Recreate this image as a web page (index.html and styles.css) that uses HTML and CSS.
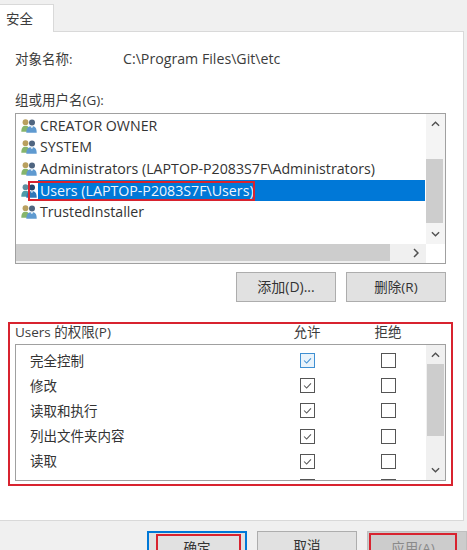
FILE: index.html
```html
<!DOCTYPE html>
<html lang="zh">
<head>
<meta charset="utf-8">
<title>安全</title>
<link rel="stylesheet" href="styles.css">
</head>
<body>
<svg class="defs" width="0" height="0" aria-hidden="true">
  <symbol id="users" viewBox="0 0 16 14">
    <circle cx="4.500" cy="3.200" r="2.900" fill="#b9a05f"/>
    <path d="M0.300 12.800c0-4.200 1.500-6.100 4.200-6.100s4.200 1.900 4.200 6.100z" fill="#86b56c"/>
    <circle cx="11" cy="3.500" r="3" fill="#4f6580"/>
    <path d="M5.300 13.800c0-4.700 2-6.800 5.500-6.800s4.900 2.100 4.900 6.800z" fill="#5f9ad0"/>
    <path d="M9.300 7h3l-.8 1.800h-1.400z" fill="#e4eef6"/>
  </symbol>
  <symbol id="users-sel" viewBox="0 0 16 14">
    <circle cx="4.500" cy="3.200" r="2.900" fill="#5f8fa0"/>
    <path d="M0.300 12.800c0-4.200 1.500-6.100 4.200-6.100s4.200 1.900 4.200 6.100z" fill="#4f9aa8"/>
    <circle cx="11" cy="3.500" r="3" fill="#25466e"/>
    <path d="M5.300 13.800c0-4.700 2-6.800 5.500-6.800s4.900 2.100 4.900 6.800z" fill="#2f78b8"/>
    <path d="M9.300 7h3l-.8 1.800h-1.400z" fill="#b8d4ea"/>
  </symbol>
  <symbol id="up" viewBox="0 0 10 6"><path d="M1 5l4-4 4 4" fill="none" stroke="#505050" stroke-width="1.500"/></symbol>
  <symbol id="down" viewBox="0 0 10 6"><path d="M1 1l4 4 4-4" fill="none" stroke="#505050" stroke-width="1.500"/></symbol>
  <symbol id="right" viewBox="0 0 6 10"><path d="M1 1l4 4-4 4" fill="none" stroke="#505050" stroke-width="1.500"/></symbol>
  <symbol id="tick" viewBox="0 0 15 15"><path d="M3.500 7.500l3 3 5-5.500" fill="none" stroke="currentColor" stroke-width="1.200"/></symbol>
</svg>
<div class="window">
  <div class="tabs"><div class="tab">安全</div></div>
  <main class="panel">
    <div class="object"><span class="object-label">对象名称:</span><span class="latin">C:\Program Files\Git\etc</span></div>
    <div class="group-label">组或用户名(G):</div>
    <div class="listbox">
      <div class="list-main">
        <div class="list-rows">
          <div class="user"><svg class="user-icon"><use href="#users"/></svg><span class="latin user-name">CREATOR OWNER</span></div>
          <div class="user"><svg class="user-icon"><use href="#users"/></svg><span class="latin user-name">SYSTEM</span></div>
          <div class="user"><svg class="user-icon"><use href="#users"/></svg><span class="latin user-name">Administrators (LAPTOP-P2083S7F\Administrators)</span></div>
          <div class="user selected"><svg class="user-icon"><use href="#users-sel"/></svg><span class="latin user-name">Users (LAPTOP-P2083S7F\Users)</span><i class="mark-user"></i></div>
          <div class="user"><svg class="user-icon"><use href="#users"/></svg><span class="latin user-name">TrustedInstaller</span></div>
        </div>
        <div class="vbar vbar-top">
          <svg class="arrow"><use href="#up"/></svg>
          <div class="vtrack"><div class="vthumb"></div></div>
          <svg class="arrow"><use href="#down"/></svg>
        </div>
      </div>
      <div class="hbar">
        <div class="hthumb"></div>
        <svg class="arrow-h"><use href="#right"/></svg>
        <div class="corner"></div>
      </div>
    </div>
    <div class="list-actions">
      <button class="btn btn-wide" type="button">添加(D)...</button>
      <button class="btn" type="button">删除(R)</button>
    </div>
    <section class="perm">
      <div class="perm-head"><span>Users 的权限(P)</span><span class="col">允许</span><span class="col">拒绝</span></div>
      <div class="perm-box">
        <div class="perm-rows">
          <div class="perm-row"><span>完全控制</span><span class="cb focus"><svg><use href="#tick"/></svg></span><span class="cb"></span></div>
          <div class="perm-row"><span>修改</span><span class="cb"><svg><use href="#tick"/></svg></span><span class="cb"></span></div>
          <div class="perm-row"><span>读取和执行</span><span class="cb"><svg><use href="#tick"/></svg></span><span class="cb"></span></div>
          <div class="perm-row"><span>列出文件夹内容</span><span class="cb"><svg><use href="#tick"/></svg></span><span class="cb"></span></div>
          <div class="perm-row"><span>读取</span><span class="cb"><svg><use href="#tick"/></svg></span><span class="cb"></span></div>
          <div class="perm-row"><span></span><span class="cb"></span><span class="cb"></span></div>
        </div>
        <div class="vbar">
          <svg class="arrow"><use href="#up"/></svg>
          <div class="vtrack"><div class="vthumb perm-thumb"></div></div>
          <svg class="arrow"><use href="#down"/></svg>
        </div>
      </div>
    </section>
  </main>
  <footer class="footer">
    <button class="btn btn-ok" type="button"><span class="mark-btn">确定</span></button>
    <button class="btn" type="button">取消</button>
    <button class="btn btn-apply" type="button"><span class="mark-apply">应用(A)</span></button>
  </footer>
</div>
</body>
</html>
```
FILE: styles.css
```css
html, body {
  margin: 0;
  padding: 0;
  background: #f0f0f0;
}
body {
  width: 467px;
  height: 550px;
  overflow: hidden;
  font: 13.5px/18px "Open Sans", "Noto Sans CJK SC", sans-serif;
  color: #3c3c3c;
}
.defs { position: absolute; }
.latin { font-size: 14.2px; }
.window {
  display: flex;
  flex-direction: column;
  height: 550px;
  overflow: hidden;
}
.tabs {
  height: 31px;
  padding-top: 4px;
  box-sizing: border-box;
  flex: none;
}
.tab {
  width: 54px;
  height: 28px;
  box-sizing: border-box;
  background: #fff;
  border: 1px solid #d9d9d9;
  border-width: 1px 1px 0 0;
  padding: 5px 0 0 6px;
  position: relative;
  z-index: 1;
}
.panel {
  width: 464px;
  height: 490px;
  flex: none;
  box-sizing: border-box;
  background: #fff;
  border: 1px solid #d9d9d9;
  border-left: 0;
  padding: 18px 17px 0 15px;
}
.object {
  display: flex;
  height: 18px;
}
.object-label { width: 108px; }
.group-label {
  margin-top: 23px;
  height: 18px;
}
.listbox {
  margin-top: 4px;
  height: 151px;
  box-sizing: border-box;
  border: 1px solid #a0a0a0;
  display: flex;
  flex-direction: column;
}
.list-main {
  flex: none;
  height: 130px;
  display: flex;
}
.list-rows {
  flex: 1;
  padding-top: 1px;
}
.user {
  position: relative;
  height: 21.6px;
  display: flex;
  align-items: center;
  padding-left: 5px;
  color: #333;
  white-space: nowrap;
}
.user-icon {
  width: 16px;
  height: 14px;
  margin-right: 1px;
  flex: none;
}
.user-name { padding-left: 2px; }
.selected .user-name {
  flex: 1;
  background: #0078d7;
  line-height: 21px;
  margin-right: 1px;
  color: #eef5fc;
}
.mark-user {
  position: absolute;
  left: 12px;
  top: 1px;
  width: 223px;
  height: 16px;
  border: 2px solid #d8232f;
}
.vbar {
  width: 19px;
  flex: none;
  display: flex;
  flex-direction: column;
  align-items: center;
  background: #f0f0f0;
}
.vbar-top { background: #f4f4f4; }
.arrow {
  width: 9px;
  height: 6px;
  flex: none;
  margin: 7px 0;
}
.vtrack {
  flex: 1;
  width: 17px;
  margin: -1px 0;
}
.vthumb {
  width: 17px;
  height: 64px;
  margin-top: 26px;
  background: #cdcdcd;
}
.vbar-top .vthumb { margin-left: -1px; }
.hbar {
  height: 19px;
  display: flex;
  background: #f0f0f0;
}
.hthumb {
  width: 374px;
  height: 17px;
  background: #cdcdcd;
}
.arrow-h {
  width: 6px;
  height: 10px;
  margin: 4px 0 0 23px;
}
.corner {
  width: 19px;
  height: 19px;
  margin-left: auto;
  background: #fff;
}
.list-actions {
  margin-top: 8px;
  display: flex;
  justify-content: flex-end;
  gap: 10px;
}
.btn {
  width: 100px;
  height: 30px;
  box-sizing: border-box;
  padding: 0;
  background: #e1e1e1;
  border: 1px solid #adadad;
  font: inherit;
  color: #333;
}
.btn-wide { font-size: 14px; }
.perm {
  margin: 20px -7px 0;
  height: 164px;
  box-sizing: border-box;
  border: 2px solid #d8232f;
  padding: 0 5px;
}
.perm-head {
  display: grid;
  grid-template-columns: 251.5px 81px 81px;
  height: 20px;
  line-height: 16px;
}
.col { text-align: center; }
.perm-box {
  height: 137px;
  box-sizing: border-box;
  border: 1px solid #a0a0a0;
  display: flex;
}
.perm-rows {
  flex: 1;
  overflow: hidden;
  padding-top: 3px;
}
.perm-row {
  display: grid;
  grid-template-columns: 270px 81px 15px;
  height: 25.2px;
  align-items: center;
  padding-left: 14px;
  color: #333;
}
.cb {
  display: block;
  width: 15px;
  height: 15px;
  box-sizing: border-box;
  border: 1px solid #555;
  color: #555;
  background: #fff;
}
.cb svg {
  display: block;
  width: 13px;
  height: 13px;
}
.cb.focus {
  border-color: #3f8fd2;
  color: #3f8fd2;
  background: #e9f3fb;
}
.perm-thumb {
  height: 72px;
  margin-top: 0;
}
.footer {
  flex: none;
  display: flex;
  gap: 10px;
  padding: 10px 0 0 147px;
}
.btn-ok {
  position: relative;
  border: 2px solid #0078d7;
}
.mark-btn {
  position: absolute;
  left: 7px;
  right: 4px;
  top: 1px;
  height: 40px;
  box-sizing: border-box;
  border: 2px solid #d8232f;
  padding: 3px 3px 0 0;
  line-height: 18px;
}
.btn-apply {
  position: relative;
  color: #8a8a8a;
  background: #cccccc;
  border-color: #bfbfbf;
}
.mark-apply {
  position: absolute;
  left: 1px;
  right: 9px;
  top: 1px;
  height: 40px;
  box-sizing: border-box;
  border: 2px solid #d8232f;
  padding-top: 4px;
  line-height: 18px;
}
```
